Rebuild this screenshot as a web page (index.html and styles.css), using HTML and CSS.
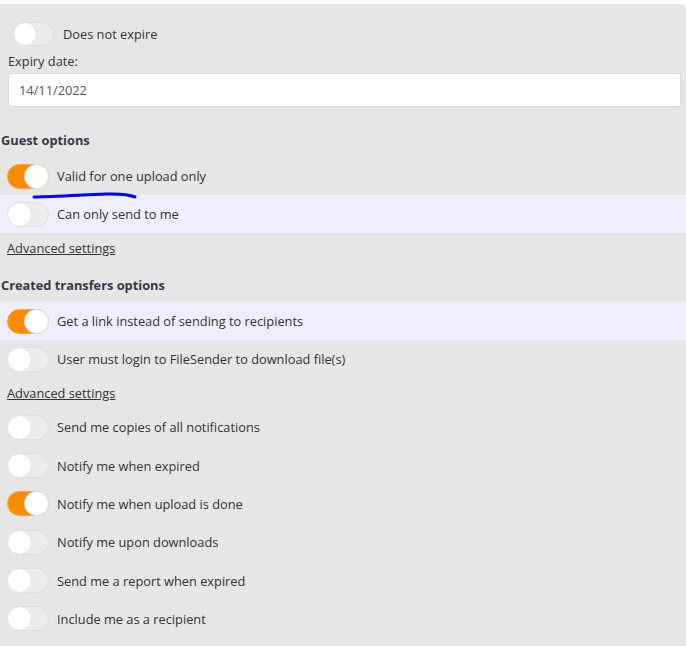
FILE: index.html
```html
<!DOCTYPE html>
<html lang="en">
<head>
<meta charset="utf-8">
<title>Options</title>
<link rel="stylesheet" href="styles.css">
</head>
<body>
<div class="panel">
  <div class="row row-expire">
    <span class="toggle"><span class="knob"></span></span>
    <span class="label">Does not expire</span>
  </div>
  <div class="field-label">Expiry date:</div>
  <div class="input">14/11/2022</div>

  <div class="heading heading-first">Guest options</div>
  <div class="row">
    <span class="toggle on"><span class="knob"></span></span>
    <span class="label">Valid for one upload only</span>
  </div>
  <div class="row hl">
    <span class="toggle"><span class="knob"></span></span>
    <span class="label">Can only send to me</span>
  </div>
  <div class="link-line"><a class="link" href="#">Advanced settings</a></div>

  <div class="heading">Created transfers options</div>
  <div class="row hl">
    <span class="toggle on"><span class="knob"></span></span>
    <span class="label">Get a link instead of sending to recipients</span>
  </div>
  <div class="row">
    <span class="toggle"><span class="knob"></span></span>
    <span class="label">User must login to FileSender to download file(s)</span>
  </div>
  <div class="link-line"><a class="link" href="#">Advanced settings</a></div>
  <div class="row r2">
    <span class="toggle"><span class="knob"></span></span>
    <span class="label">Send me copies of all notifications</span>
  </div>
  <div class="row r2">
    <span class="toggle"><span class="knob"></span></span>
    <span class="label">Notify me when expired</span>
  </div>
  <div class="row r2">
    <span class="toggle on"><span class="knob"></span></span>
    <span class="label">Notify me when upload is done</span>
  </div>
  <div class="row r2">
    <span class="toggle"><span class="knob"></span></span>
    <span class="label">Notify me upon downloads</span>
  </div>
  <div class="row r2">
    <span class="toggle"><span class="knob"></span></span>
    <span class="label">Send me a report when expired</span>
  </div>
  <div class="row r2">
    <span class="toggle"><span class="knob"></span></span>
    <span class="label">Include me as a recipient</span>
  </div>
</div>
<svg class="annotation" width="112" height="14" viewBox="0 0 112 14">
  <path d="M3 8 C 25 7.5, 50 6, 75 5 C 90 4.5, 97 5, 104 8" fill="none" stroke="#0000ff" stroke-width="3" stroke-linecap="round"/>
</svg>
</body>
</html>
```

FILE: styles.css
```css
html, body {
  margin: 0;
  padding: 0;
  background: #ffffff;
}
body {
  font-family: "Open Sans", "Liberation Sans", sans-serif;
  font-size: 12.8px;
  color: #333333;
  position: relative;
  height: 646px;
  overflow: hidden;
}
.panel {
  margin-top: 4px;
  background: #e6e6e6;
  border-top-right-radius: 6px;
  padding-top: 11px;
  height: 642px;
  box-sizing: border-box;
}
.row {
  display: flex;
  align-items: center;
  height: 38px;
  padding-left: 7px;
  gap: 8px;
}
.row.r2 {
  height: 38.35px;
}
.row-expire {
  padding-left: 13px;
  gap: 9px;
}
.row.hl {
  background: #eeeefc;
}
.toggle {
  position: relative;
  display: inline-block;
  width: 42px;
  height: 25px;
  box-sizing: border-box;
  border-radius: 13px;
  background: #ececec;
  border: 1px solid #dedede;
  flex: none;
}
.row-expire .toggle {
  width: 41px;
  height: 24px;
}
.toggle .knob {
  position: absolute;
  top: -1px;
  left: -1px;
  width: 25px;
  height: 25px;
  box-sizing: border-box;
  border-radius: 50%;
  background: #ffffff;
  border: 1px solid #e2e2e2;
}
.row-expire .toggle .knob {
  width: 24px;
  height: 24px;
}
.toggle.on {
  background: #fb8c00;
  border-color: #f2a54a;
}
.toggle.on .knob {
  left: auto;
  right: -1px;
}
.label {
  line-height: 20px;
  color: #333333;
}
.field-label {
  padding-left: 8px;
  line-height: 16px;
  color: #333333;
}
.input {
  margin: 4px 5px 0 8px;
  height: 34px;
  box-sizing: border-box;
  background: #ffffff;
  border: 1px solid #dcdcdc;
  border-radius: 3px;
  padding-left: 10px;
  line-height: 32px;
  color: #555555;
}
.heading {
  font-weight: bold;
  line-height: 20px;
  padding: 12px 0 7px 1px;
  color: #333a44;
}
.heading-first {
  padding-top: 23px;
}
.link-line {
  height: 30px;
  line-height: 30px;
  padding-left: 7px;
}
.link {
  color: #333333;
  text-decoration: underline;
}
.annotation {
  position: absolute;
  left: 31px;
  top: 189px;
}
```
